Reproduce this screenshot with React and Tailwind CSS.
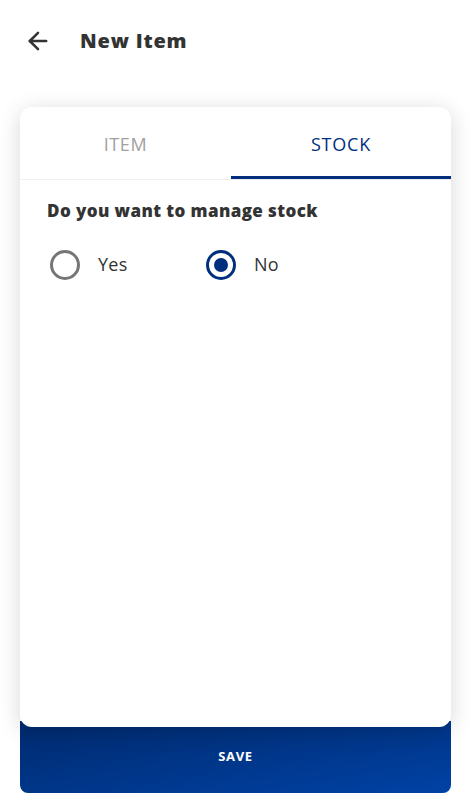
import { ArrowLeft } from 'lucide-react'

const font = { fontFamily: '"Open Sans", "Liberation Sans", sans-serif' }

function Radio({ label, checked }) {
  return (
    <label className="flex items-center gap-[18px] cursor-pointer">
      <span
        className={`flex h-[30px] w-[30px] items-center justify-center rounded-full border-[3px] ${
          checked ? 'border-[#002f7e]' : 'border-[#767676]'
        }`}
      >
        {checked && <span className="h-[14px] w-[14px] rounded-full bg-[#002f7e]" />}
      </span>
      <span className="text-[18px] tracking-[0.3px] text-[#333]">{label}</span>
    </label>
  )
}

export default function App() {
  return (
    <div className="min-h-[812px] bg-white text-[#333]" style={font}>
      <header className="flex h-[82px] items-center px-[24px]">
        <ArrowLeft className="h-[28px] w-[28px] text-[#333]" strokeWidth={2.2} />
        <h1 className="ml-[28px] text-[20px] font-extrabold tracking-[0.8px]">New Item</h1>
      </header>

      <div className="mx-[20px] mt-[25px]">
        <div className="relative z-10 h-[620px] rounded-[12px] bg-white shadow-[0_4px_22px_rgba(0,0,0,0.16)]">
          <div className="flex h-[73px] border-b border-[#f0f0f0]">
            <button className="w-[211px] pt-[2px] text-[18px] tracking-[0.6px] text-[#a0a0a0]">ITEM</button>
            <button className="flex-1 border-b-[3px] border-[#002f7e] pt-[5px] text-[18px] tracking-[0.8px] text-[#002f7e]">
              STOCK
            </button>
          </div>
          <div className="px-[27px] pt-[18px]">
            <p className="text-[17px] font-extrabold tracking-[0.4px]">Do you want to manage stock</p>
            <div className="mt-[26px] flex pl-[3px]">
              <div className="w-[156px]">
                <Radio label="Yes" />
              </div>
              <Radio label="No" checked />
            </div>
          </div>
        </div>
        <button className="-mt-[6px] flex h-[72px] w-full items-center justify-center rounded-b-[8px] bg-gradient-to-br from-[#002a6e] to-[#0042a5] text-[13px] font-bold tracking-[0.6px] text-white">
          SAVE
        </button>
      </div>
    </div>
  )
}
